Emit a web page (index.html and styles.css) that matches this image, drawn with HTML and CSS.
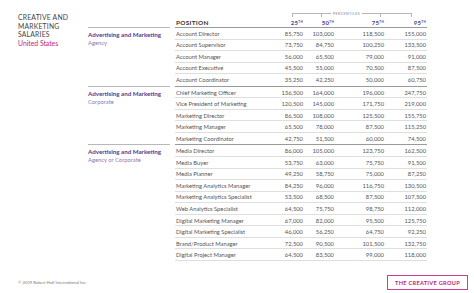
FILE: index.html
```html
<!DOCTYPE html>
<html lang="en">
<head>
<meta charset="utf-8">
<title>Creative and Marketing Salaries</title>
<link rel="stylesheet" href="styles.css">
</head>
<body>

<div class="page">

  <header class="brand">
    <h1>CREATIVE AND<br>MARKETING<br>SALARIES</h1>
    <p class="region">United States</p>
  </header>

  <div class="report">

    <div class="head">
      <fieldset class="bracket">
        <legend>PERCENTILES</legend>
        <div class="ticks"><span></span><span></span><span></span></div>
      </fieldset>
      <div class="row row-head">
        <span>POSITION</span>
        <span class="num">25<sup>TH</sup></span>
        <span class="num">50<sup>TH</sup></span>
        <span class="num">75<sup>TH</sup></span>
        <span class="num">95<sup>TH</sup></span>
      </div>
    </div>

    <section class="group">
      <div class="label">
        <h2>Advertising and Marketing</h2>
        <p>Agency</p>
      </div>
      <div class="rows">
        <div class="row"><span>Account Director</span><span class="num">85,750</span><span class="num">103,000</span><span class="num">118,500</span><span class="num">155,000</span></div>
        <div class="row"><span>Account Supervisor</span><span class="num">73,750</span><span class="num">84,750</span><span class="num">100,250</span><span class="num">133,500</span></div>
        <div class="row"><span>Account Manager</span><span class="num">56,000</span><span class="num">65,500</span><span class="num">79,000</span><span class="num">91,000</span></div>
        <div class="row"><span>Account Executive</span><span class="num">45,500</span><span class="num">55,000</span><span class="num">70,500</span><span class="num">87,500</span></div>
        <div class="row"><span>Account Coordinator</span><span class="num">35,250</span><span class="num">42,250</span><span class="num">50,000</span><span class="num">60,750</span></div>
      </div>
    </section>

    <section class="group">
      <div class="label">
        <h2>Advertising and Marketing</h2>
        <p>Corporate</p>
      </div>
      <div class="rows">
        <div class="row"><span>Chief Marketing Officer</span><span class="num">136,500</span><span class="num">164,000</span><span class="num">196,000</span><span class="num">247,750</span></div>
        <div class="row"><span>Vice President of Marketing</span><span class="num">120,500</span><span class="num">145,000</span><span class="num">171,750</span><span class="num">219,000</span></div>
        <div class="row"><span>Marketing Director</span><span class="num">86,500</span><span class="num">108,000</span><span class="num">125,500</span><span class="num">155,750</span></div>
        <div class="row"><span>Marketing Manager</span><span class="num">65,500</span><span class="num">78,000</span><span class="num">87,500</span><span class="num">115,250</span></div>
        <div class="row"><span>Marketing Coordinator</span><span class="num">42,750</span><span class="num">51,500</span><span class="num">60,000</span><span class="num">74,500</span></div>
      </div>
    </section>

    <section class="group group-last">
      <div class="label">
        <h2>Advertising and Marketing</h2>
        <p>Agency or Corporate</p>
      </div>
      <div class="rows">
        <div class="row"><span>Media Director</span><span class="num">86,000</span><span class="num">105,000</span><span class="num">123,750</span><span class="num">162,500</span></div>
        <div class="row"><span>Media Buyer</span><span class="num">53,750</span><span class="num">63,000</span><span class="num">75,750</span><span class="num">91,500</span></div>
        <div class="row"><span>Media Planner</span><span class="num">49,250</span><span class="num">58,750</span><span class="num">75,000</span><span class="num">87,250</span></div>
        <div class="row"><span>Marketing Analytics Manager</span><span class="num">84,250</span><span class="num">96,000</span><span class="num">116,750</span><span class="num">130,500</span></div>
        <div class="row"><span>Marketing Analytics Specialist</span><span class="num">53,500</span><span class="num">68,500</span><span class="num">87,500</span><span class="num">107,500</span></div>
        <div class="row"><span>Web Analytics Specialist</span><span class="num">64,500</span><span class="num">75,750</span><span class="num">98,750</span><span class="num">112,000</span></div>
        <div class="row"><span>Digital Marketing Manager</span><span class="num">67,000</span><span class="num">82,000</span><span class="num">95,500</span><span class="num">125,750</span></div>
        <div class="row"><span>Digital Marketing Specialist</span><span class="num">46,000</span><span class="num">56,250</span><span class="num">64,750</span><span class="num">92,250</span></div>
        <div class="row"><span>Brand/Product Manager</span><span class="num">72,500</span><span class="num">90,500</span><span class="num">101,500</span><span class="num">132,750</span></div>
        <div class="row"><span>Digital Project Manager</span><span class="num">64,500</span><span class="num">83,500</span><span class="num">99,000</span><span class="num">118,000</span></div>
      </div>
    </section>

  </div>
</div>

<footer class="foot">
  <p class="copy">&copy; 2019 Robert Half International Inc.</p>
  <div class="logo">THE CREATIVE GROUP</div>
</footer>

</body>
</html>
```

FILE: styles.css
```css
html, body {
    margin: 0;
    padding: 0;
    background: #fff;
}
body {
    width: 474px;
    height: 293px;
    overflow: hidden;
    font-family: "Lato", "Liberation Sans", sans-serif;
    color: #555;
}

.page {
    display: flex;
    padding-left: 18px;
}

/* title block */
.brand {
    width: 70px;
    padding-top: 13px;
}
.brand h1 {
    margin: 0;
    font-size: 6.8px;
    line-height: 8.6px;
    font-weight: 400;
    letter-spacing: 0.2px;
    color: #444;
}
.region {
    margin: 0;
    font-size: 6.8px;
    line-height: 8.6px;
    color: #c0237c;
}

/* table area */
.report {
    width: 339px;
}
.head {
    height: 27px;
    margin-left: 87px;
    display: flex;
    flex-direction: column;
    justify-content: flex-end;
}
.bracket {
    margin: 0 0 0 117px;
    padding: 0;
    width: 118px;
    min-width: 0;
    border: 1px solid #b5b5b5;
    border-bottom: none;
}
.bracket legend {
    margin-left: 38px;
    padding: 0 2px;
    font-size: 3.6px;
    line-height: 3px;
    letter-spacing: 0.4px;
    color: #888;
}
.ticks {
    display: grid;
    grid-template-columns: 29px 59px 1fr;
    height: 3px;
    margin-top: -1px;
}
.ticks span {
    border-right: 1px solid #b5b5b5;
}
.ticks span:last-child {
    border-right: none;
}

.row {
    display: grid;
    grid-template-columns: 94px 33px 31px 50px 42px;
    padding: 0 1px;
    align-items: center;
    box-sizing: border-box;
    height: 11.55px;
    font-size: 5.8px;
    border-bottom: 1px solid #dedede;
}
.num {
    text-align: right;
}
.row-head {
    height: 10px;
    border-bottom: none;
    font-weight: 700;
    color: #333;
    letter-spacing: 0.3px;
}
.row-head span {
    font-size: 6.4px;
}
.row-head .num {
    color: #4e3d8f;
    font-size: 6px;
}
.row-head sup {
    font-size: 3px;
    vertical-align: 2px;
}

.group {
    display: grid;
    grid-template-columns: 82px 252px;
    column-gap: 5px;
}
.label {
    border-top: 1px solid #b8b8b8;
    padding-top: 3px;
}
.label h2 {
    margin: 0;
    font-size: 6.2px;
    line-height: 8px;
    font-weight: 700;
    color: #4e3d8f;
}
.label p {
    margin: 0;
    font-size: 5.8px;
    line-height: 7px;
    color: #8d78b9;
}
.rows {
    border-top: 1px solid #9a9a9a;
}
.rows .row:last-child {
    border-bottom: none;
}
.group-last .rows .row:last-child {
    border-bottom: 1px solid #dedede;
}

/* footer */
.foot {
    display: flex;
    justify-content: space-between;
    align-items: center;
    padding: 14px 6px 0 18px;
}
.copy {
    margin: 0;
    font-size: 4.2px;
    color: #777;
}
.logo {
    width: 81px;
    height: 15px;
    box-sizing: border-box;
    border: 1.5px solid #cf3f8f;
    display: flex;
    align-items: center;
    justify-content: center;
    font-size: 5.6px;
    font-weight: 700;
    letter-spacing: 0.3px;
    color: #c0237c;
}
```
